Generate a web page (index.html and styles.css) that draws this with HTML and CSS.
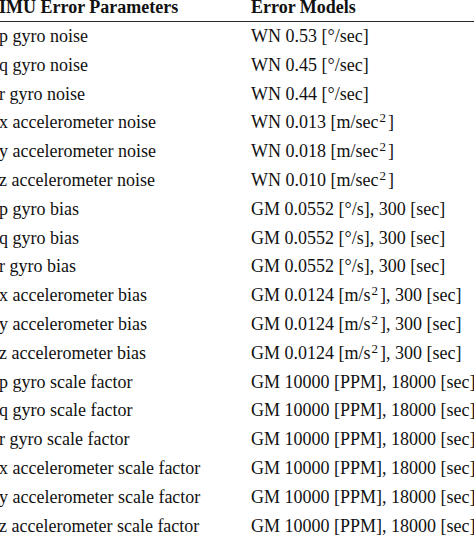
FILE: index.html
```html
<!DOCTYPE html>
<html>
<head>
<meta charset="utf-8">
<link rel="stylesheet" href="styles.css">
</head>
<body>
<div class="table">
  <div class="row head"><div class="c1">IMU Error Parameters</div><div class="c2">Error Models</div></div>
  <div class="rule"></div>
  <div class="row"><div class="c1">p gyro noise</div><div class="c2">WN 0.53 [°/sec]</div></div>
  <div class="row"><div class="c1">q gyro noise</div><div class="c2">WN 0.45 [°/sec]</div></div>
  <div class="row"><div class="c1">r gyro noise</div><div class="c2">WN 0.44 [°/sec]</div></div>
  <div class="row"><div class="c1">x accelerometer noise</div><div class="c2">WN 0.013 [m/sec<sup>2</sup>]</div></div>
  <div class="row"><div class="c1">y accelerometer noise</div><div class="c2">WN 0.018 [m/sec<sup>2</sup>]</div></div>
  <div class="row"><div class="c1">z accelerometer noise</div><div class="c2">WN 0.010 [m/sec<sup>2</sup>]</div></div>
  <div class="row"><div class="c1">p gyro bias</div><div class="c2">GM 0.0552 [°/s], 300 [sec]</div></div>
  <div class="row"><div class="c1">q gyro bias</div><div class="c2">GM 0.0552 [°/s], 300 [sec]</div></div>
  <div class="row"><div class="c1">r gyro bias</div><div class="c2">GM 0.0552 [°/s], 300 [sec]</div></div>
  <div class="row"><div class="c1">x accelerometer bias</div><div class="c2">GM 0.0124 [m/s<sup>2</sup>], 300 [sec]</div></div>
  <div class="row"><div class="c1">y accelerometer bias</div><div class="c2">GM 0.0124 [m/s<sup>2</sup>], 300 [sec]</div></div>
  <div class="row"><div class="c1">z accelerometer bias</div><div class="c2">GM 0.0124 [m/s<sup>2</sup>], 300 [sec]</div></div>
  <div class="row"><div class="c1">p gyro scale factor</div><div class="c2">GM 10000 [PPM], 18000 [sec]</div></div>
  <div class="row"><div class="c1">q gyro scale factor</div><div class="c2">GM 10000 [PPM], 18000 [sec]</div></div>
  <div class="row"><div class="c1">r gyro scale factor</div><div class="c2">GM 10000 [PPM], 18000 [sec]</div></div>
  <div class="row"><div class="c1">x accelerometer scale factor</div><div class="c2">GM 10000 [PPM], 18000 [sec]</div></div>
  <div class="row"><div class="c1">y accelerometer scale factor</div><div class="c2">GM 10000 [PPM], 18000 [sec]</div></div>
  <div class="row"><div class="c1">z accelerometer scale factor</div><div class="c2">GM 10000 [PPM], 18000 [sec]</div></div>
</div>
</body>
</html>
```

FILE: styles.css
```css
html, body {
  margin: 0;
  padding: 0;
  background: #ffffff;
  overflow: hidden;
}
.table {
  font-family: "Liberation Serif", "Times New Roman", serif;
  font-size: 18px;
  color: #111111;
  margin-left: -1px;
  width: 480px;
}
.row {
  display: grid;
  grid-template-columns: 252px auto;
  height: 28.8px;
  line-height: 28.8px;
  white-space: nowrap;
}
.row.head {
  font-weight: bold;
  height: 20.5px;
  line-height: 14px;
}
.rule {
  height: 1.5px;
  background: #2a2a2a;
  margin-left: 1px;
}
sup {
  font-size: 0.72em;
  line-height: 0;
  vertical-align: 0.48em;
  margin-left: 1px;
  margin-right: 2px;
}
```
